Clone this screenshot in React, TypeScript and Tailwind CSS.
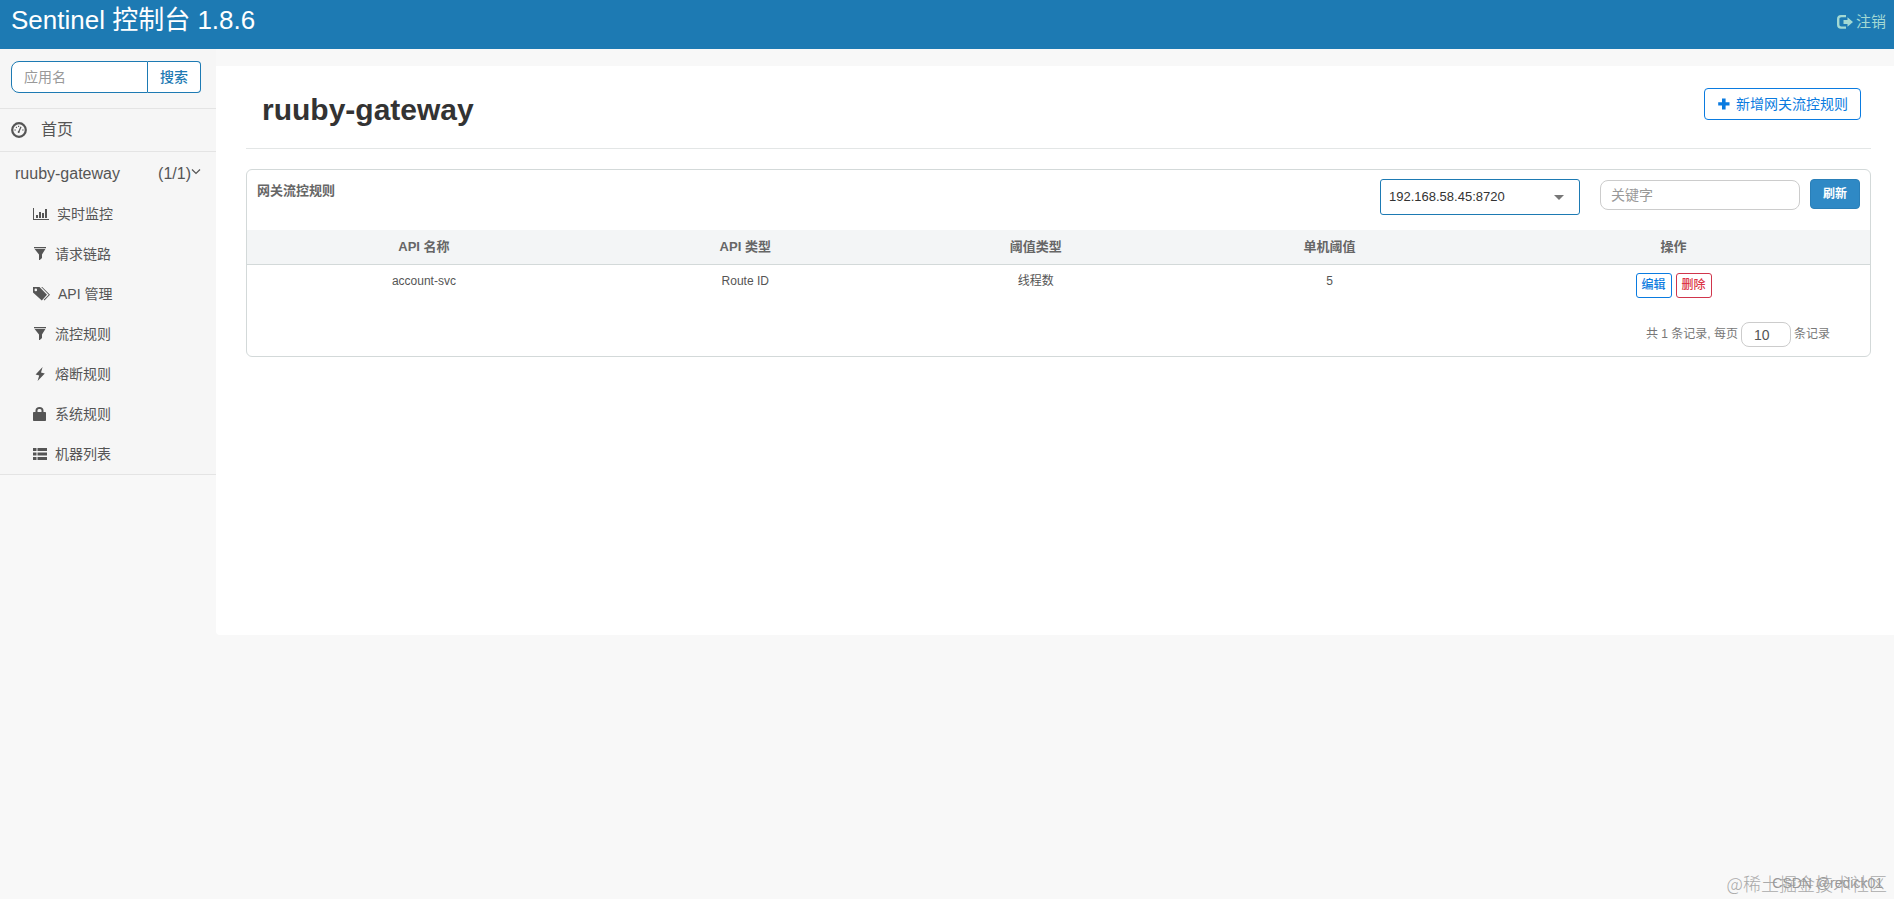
import { useState } from "react";

const menu = [
  { icon: "stats", width: 16, text: "实时监控" },
  { icon: "filter", width: 14, text: "请求链路" },
  { icon: "tags", width: 17, text: "API 管理" },
  { icon: "filter", width: 14, text: "流控规则" },
  { icon: "flash", width: 14, text: "熔断规则" },
  { icon: "lock", width: 14, text: "系统规则" },
  { icon: "list", width: 14, text: "机器列表" },
];

const rules = [{ name: "account-svc", type: "Route ID", grade: "线程数", count: 5 }];

function Icon({ name, width = 14 }: { name: string; width?: number }) {
  return (
    <svg width={width} height="14" viewBox={`0 0 ${width} 14`} fill="currentColor" className="shrink-0" aria-hidden="true">
      {name === "stats" && (
        <path d="M0 1h1v11h15v1H0zM3 8h2v3H3zM6 5h2v6H6zM9 6h2v5H9zM12 2h2v9h-2z" />
      )}
      {name === "filter" && <path d="M1 0h12v1.2H1zM1.6 2h10.8L9 7.400V11L6.800 13H6V7.400z" />}
      {name === "tags" && (
        <>
          <path fillRule="evenodd" d="M0 0h6.500L14 7.700 8.800 13.500 0 5.500zM2.800 1.600a1.300 1.300 0 1 0 0 2.600 1.300 1.300 0 0 0 0-2.600z" />
          <path d="M8.200 0h1L17 7.700l-5.600 5.800-.7-.7 5-5.100z" />
        </>
      )}
      {name === "flash" && <path d="M9.600 0L2.600 7.400l3.600 1L4.600 14l7.200-7.600-3.800-1z" />}
      {name === "lock" && (
        <path fillRule="evenodd" d="M2.500 5V3.500C2.500 1.300 4 0 6.500 0s4 1.300 4 3.500V5h1.700c.5 0 .8.300.8.800v7.400c0 .5-.3.800-.8.800H.8c-.5 0-.8-.3-.8-.8V5.800C0 5.300.3 5 .8 5zM4.500 5h4V3.500c0-1-.7-1.500-2-1.500s-2 .5-2 1.500z" />
      )}
      {name === "list" && (
        <path d="M0 1h3.500v3H0zM4.500 1H14v3H4.500zM0 5.500h3.500v3H0zM4.500 5.500H14v3H4.500zM0 10h3.500v3H0zM4.500 10H14v3H4.500z" />
      )}
      {name === "plus" && <path d="M5 1.500h3.600v3.700h3.900v3.400H8.600v3.900H5V8.600H1.200V5.200H5z" />}
      {name === "logout" && (
        <path d="M9 0v2.200H4.400c-1.300 0-2 .7-2 1.900v5.400c0 1.200.7 1.900 2 1.900H9v2.300H4c-2.500 0-4-1.600-4-4V4c0-2.400 1.500-4 4-4zM10.500 2.200L16 7l-5.500 4.800V9H6.500V5h4z" />
      )}
    </svg>
  );
}

function DashboardIcon() {
  return (
    <svg width="16" height="16" viewBox="0 0 16 16" fill="none" stroke="currentColor" className="shrink-0" aria-hidden="true">
      <circle cx="8" cy="8" r="6.800" strokeWidth="2.200" />
      <path d="M7.700 10L10 4.800" strokeWidth="1.300" />
      <path d="M3.400 8h1.400M5 5l.8.8M7.600 3.800v1.100M11.200 8h1.400" strokeWidth="1.100" />
      <circle cx="7.700" cy="10" r="1" fill="currentColor" stroke="none" />
    </svg>
  );
}

export default function App() {
  const [app, setApp] = useState("");
  const [keyword, setKeyword] = useState("");
  const [size, setSize] = useState("10");

  return (
    <div className="relative min-h-screen bg-[#f8f8f8] font-['Liberation_Sans','Noto_Sans_CJK_SC',sans-serif] text-sm text-[#555]">
      <header className="flex h-[49px] justify-between bg-[#1d7ab3] pr-2 pl-[11px]">
        <a href="#" className="h-10 text-[26px] leading-10 text-white">Sentinel 控制台 1.8.6</a>
        <a href="#" className="flex h-11 items-center gap-[3px] text-[15px] text-[#a3d9d3]">
          <Icon name="logout" width={16} />
          注销
        </a>
      </header>

      <div className="flex items-start">
        <aside className="w-[216px] shrink-0 border-b border-[#e4e4e4] bg-[#f6f6f6]">
          <form className="flex h-[59px] pt-3 pr-[15px] pl-[11px]" onSubmit={(e) => e.preventDefault()}>
            <input
              aria-label="应用名"
              placeholder="应用名"
              value={app}
              onChange={(e) => setApp(e.target.value)}
              className="h-8 min-w-0 flex-1 rounded-l-lg border border-[#1d7ab3] bg-white px-3 placeholder:text-[#999] focus:outline-none"
            />
            <button className="h-8 w-[53px] rounded-r border border-l-0 border-[#1d7ab3] bg-white font-['Liberation_Sans','Noto_Sans_CJK_SC_Medium','Noto_Sans_CJK_SC',sans-serif] font-medium text-[#1d7ab3]">搜索</button>
          </form>
          <nav>
            <a href="#" className="flex h-11 items-center gap-[14px] border-y border-[#e4e4e4] pl-[11px] text-base">
              <DashboardIcon />
              首页
            </a>
            <a href="#" className="flex h-[42px] items-center pt-px pr-[15px] pl-[15px] text-base">
              <span className="flex-1">ruuby-gateway</span>
              (1/1)
              <svg width="10" height="12" viewBox="0 0 10 12" fill="none" stroke="currentColor" strokeWidth="1.200" aria-hidden="true">
                <path d="M1 1.500l4 4 4-4" />
              </svg>
            </a>
            <ul>
              {menu.map((item) => (
                <li key={item.text}>
                  <a href="#" className="flex h-10 items-center gap-2 pl-[33px]">
                    <Icon name={item.icon} width={item.width} />
                    {item.text}
                  </a>
                </li>
              ))}
            </ul>
          </nav>
        </aside>

        <main className="mt-[17px] h-[569px] min-w-0 flex-1 rounded-bl bg-white pr-[23px] pl-[30px]">
          <div className="flex h-[83px] items-start justify-between border-b border-[#e3e6e6] pt-[22px] pr-[10px] pl-4">
            <h1 className="text-[30px] leading-[44px] font-bold text-[#333]">ruuby-gateway</h1>
            <button className="flex h-8 items-center gap-[5px] rounded border border-[#0a7be0] px-3 text-[#0a7be0]">
              <Icon name="plus" />
              新增网关流控规则
            </button>
          </div>

          <section className="mt-5 rounded-md border border-[#d3d9d9] text-xs">
            <div className="flex h-[60px] items-start pt-[9px] pr-[10px] pl-[10px]">
              <h2 className="flex-1 text-[13px] leading-6 font-bold text-[#666]">网关流控规则</h2>
              <div className="relative mr-5">
                <select aria-label="机器" className="h-9 w-[200px] appearance-none rounded-[3px] border border-[#1d7ab3] bg-white px-2 text-[13px] text-[#333]">
                  <option>192.168.58.45:8720</option>
                </select>
                <svg width="10" height="5" viewBox="0 0 10 5" className="pointer-events-none absolute top-4 right-4" aria-hidden="true">
                  <path d="M0 0h10L5 5z" fill="#777" />
                </svg>
              </div>
              <input
                aria-label="关键字"
                placeholder="关键字"
                value={keyword}
                onChange={(e) => setKeyword(e.target.value)}
                className="mt-px mr-[10px] h-[30px] w-[200px] rounded-lg border border-[#ccc] px-[10px] text-sm placeholder:text-[#999]"
              />
              <button className="h-[30px] w-[50px] rounded border border-[#2a7fb8] bg-[#2f89c5] font-bold text-white">刷新</button>
            </div>

            <table className="w-full table-fixed text-center">
              <thead>
                <tr className="h-[34px] border-b border-[#d3d9d9] bg-[#f3f5f6] text-[13px] text-[#666]">
                  <th className="w-[21.8%]">API 名称</th>
                  <th className="w-[17.8%]">API 类型</th>
                  <th className="w-[18%]">阈值类型</th>
                  <th className="w-[18.2%]">单机阈值</th>
                  <th>操作</th>
                </tr>
              </thead>
              <tbody>
                {rules.map((rule) => (
                  <tr key={rule.name} className="h-[43px] align-top leading-8">
                    <td>{rule.name}</td>
                    <td>{rule.type}</td>
                    <td>{rule.grade}</td>
                    <td>{rule.count}</td>
                    <td>
                      <div className="flex justify-center gap-1 pt-2 font-['Liberation_Sans','Noto_Sans_CJK_SC_Medium','Noto_Sans_CJK_SC',sans-serif] font-medium">
                        <button className="h-[25px] w-9 rounded-[3px] border border-[#0a7be0] leading-[23px] text-[#0a7be0]">编辑</button>
                        <button className="h-[25px] w-9 rounded-[3px] border border-[#d0354c] leading-[23px] text-[#dc3545]">删除</button>
                      </div>
                    </td>
                  </tr>
                ))}
              </tbody>
            </table>

            <div className="flex h-[49px] items-start justify-end gap-[3px] pt-[15px] pr-10 leading-6 text-[#777]">
              <label htmlFor="size">共 1 条记录, 每页</label>
              <input
                id="size"
                value={size}
                onChange={(e) => setSize(e.target.value)}
                className="h-[25px] w-[50px] rounded-lg border border-[#ccc] px-3 text-sm text-[#555]"
              />
              <span>条记录</span>
            </div>
          </section>
        </main>
      </div>

      <div className="pointer-events-none absolute right-[7px] bottom-1 font-['Noto_Sans_CJK_SC',sans-serif] text-[18px] leading-6 font-light text-[#aaa]">@稀土掘金技术社区</div>
      <div className="pointer-events-none absolute right-[11px] bottom-1 text-sm leading-6 text-[#999]">CSDN @redick01</div>
    </div>
  );
}
